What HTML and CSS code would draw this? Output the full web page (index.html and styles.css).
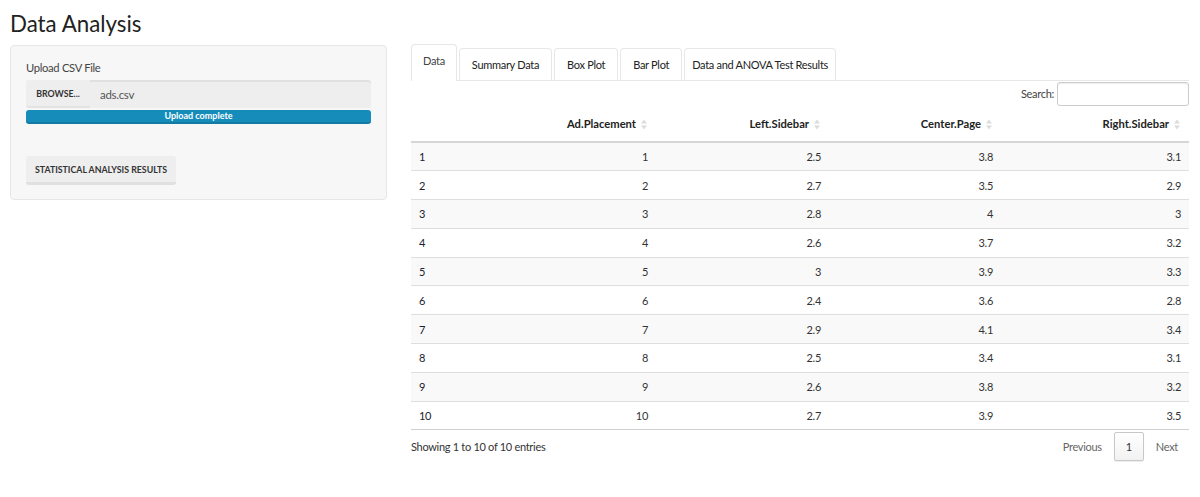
FILE: index.html
```html
<!DOCTYPE html>
<html>
<head>
<meta charset="utf-8">
<link rel="stylesheet" href="styles.css">
</head>
<body>
<div class="page">
  <h1 class="title">Data Analysis</h1>
  <div class="layout">
    <div class="sidebar">
      <label class="field-label">Upload CSV File</label>
      <div class="input-group">
        <span class="browse">Browse...</span>
        <span class="filename">ads.csv</span>
      </div>
      <div class="progress">Upload complete</div>
      <button class="btn">Statistical Analysis Results</button>
    </div>
    <div class="main">
      <ul class="tabs">
        <li class="tab active">Data</li>
        <li class="tab">Summary Data</li>
        <li class="tab">Box Plot</li>
        <li class="tab">Bar Plot</li>
        <li class="tab wide">Data and ANOVA Test Results</li>
      </ul>
      <div class="search-row">
        <label class="search-label">Search:</label>
        <span class="search-input"></span>
      </div>
      <table class="grid">
        <colgroup>
          <col class="c0"><col class="c1"><col class="c2"><col class="c3"><col class="c4">
        </colgroup>
        <thead>
          <tr>
            <th class="left"></th>
            <th>Ad.Placement<span class="sort"><svg width="6" height="11" viewBox="0 0 6 11"><path d="M0 4.5 L3 0.5 L6 4.5 Z M0 6.5 L3 10.5 L6 6.5 Z" fill="#dcdcdc"/></svg></span></th>
            <th>Left.Sidebar<span class="sort"><svg width="6" height="11" viewBox="0 0 6 11"><path d="M0 4.5 L3 0.5 L6 4.5 Z M0 6.5 L3 10.5 L6 6.5 Z" fill="#dcdcdc"/></svg></span></th>
            <th>Center.Page<span class="sort"><svg width="6" height="11" viewBox="0 0 6 11"><path d="M0 4.5 L3 0.5 L6 4.5 Z M0 6.5 L3 10.5 L6 6.5 Z" fill="#dcdcdc"/></svg></span></th>
            <th>Right.Sidebar<span class="sort"><svg width="6" height="11" viewBox="0 0 6 11"><path d="M0 4.5 L3 0.5 L6 4.5 Z M0 6.5 L3 10.5 L6 6.5 Z" fill="#dcdcdc"/></svg></span></th>
          </tr>
        </thead>
        <tbody>
          <tr><td class="left">1</td><td>1</td><td>2.5</td><td>3.8</td><td>3.1</td></tr>
          <tr><td class="left">2</td><td>2</td><td>2.7</td><td>3.5</td><td>2.9</td></tr>
          <tr><td class="left">3</td><td>3</td><td>2.8</td><td>4</td><td>3</td></tr>
          <tr><td class="left">4</td><td>4</td><td>2.6</td><td>3.7</td><td>3.2</td></tr>
          <tr><td class="left">5</td><td>5</td><td>3</td><td>3.9</td><td>3.3</td></tr>
          <tr><td class="left">6</td><td>6</td><td>2.4</td><td>3.6</td><td>2.8</td></tr>
          <tr><td class="left">7</td><td>7</td><td>2.9</td><td>4.1</td><td>3.4</td></tr>
          <tr><td class="left">8</td><td>8</td><td>2.5</td><td>3.4</td><td>3.1</td></tr>
          <tr><td class="left">9</td><td>9</td><td>2.6</td><td>3.8</td><td>3.2</td></tr>
          <tr><td class="left">10</td><td>10</td><td>2.7</td><td>3.9</td><td>3.5</td></tr>
        </tbody>
      </table>
      <div class="footer">
        <span class="info">Showing 1 to 10 of 10 entries</span>
        <div class="pager">
          <span class="pg disabled">Previous</span>
          <span class="pg current">1</span>
          <span class="pg disabled">Next</span>
        </div>
      </div>
    </div>
  </div>
</div>
</body>
</html>
```

FILE: styles.css
```css
* { box-sizing: border-box; }
body {
  margin: 0;
  font-family: Lato, "Open Sans", sans-serif;
  font-size: 11px;
  letter-spacing: -0.3px;
  color: #222;
  background: #fff;
}
.page { padding: 0 11px 0 10px; }
.title {
  margin: 0 0 7px 0;
  padding-top: 10px;
  font-size: 22.3px;
  line-height: 28px;
  font-weight: 400;
  letter-spacing: 0;
  color: #222;
}
.layout {
  display: flex;
  gap: 24px;
  align-items: flex-start;
}
.sidebar {
  width: 377px;
  height: 155px;
  flex: none;
  background: #f7f7f7;
  border: 1px solid #e7e7e7;
  border-radius: 4px;
  padding: 14px 15px 0 15px;
  display: flex;
  flex-direction: column;
  align-items: flex-start;
}
.field-label {
  color: #444;
  line-height: 16px;
  margin-bottom: 4px;
  font-size: 11.2px;
}
.input-group {
  display: flex;
  width: 100%;
  height: 28px;
}
.browse {
  width: 64px;
  flex: none;
  background: #eee;
  border-bottom: 2px solid #e2e2e2;
  border-radius: 3px 0 0 3px;
  font-weight: 700;
  font-size: 8.8px;
  letter-spacing: 0;
  text-transform: uppercase;
  color: #333;
  display: flex;
  align-items: center;
  justify-content: center;
  padding-top: 1px;
}
.filename {
  flex: 1;
  background: #eee;
  border-radius: 0 3px 3px 0;
  box-shadow: inset 0 2px 0 rgba(0,0,0,0.06);
  display: flex;
  align-items: center;
  padding-left: 10px;
  color: #555;
  font-size: 11.5px;
}
.progress {
  width: 100%;
  height: 14px;
  margin-top: 2px;
  background: #158cba;
  border-bottom: 2px solid #127ba3;
  border-radius: 3px;
  color: #fff;
  font-size: 9px;
  font-weight: 700;
  letter-spacing: 0;
  text-align: center;
  line-height: 12px;
}
.btn {
  margin-top: 32px;
  width: 150px;
  height: 29px;
  background: #eee;
  border: none;
  border-bottom: 3px solid #e0e0e0;
  border-radius: 3px;
  font-family: inherit;
  font-weight: 700;
  font-size: 8.8px;
  letter-spacing: 0;
  text-transform: uppercase;
  color: #333;
  padding: 1px 0 0 0;
}
.main {
  width: 778px;
  flex: none;
}
.tabs {
  list-style: none;
  margin: 0;
  padding: 0;
  display: flex;
  gap: 2px;
  align-items: flex-end;
  border-bottom: 1px solid #e7e7e7;
  height: 36px;
}
.tab {
  height: 32px;
  border: 1px solid #e7e7e7;
  border-bottom: none;
  border-radius: 4px 4px 0 0;
  padding: 0 12px;
  display: flex;
  align-items: center;
  color: #222;
  white-space: nowrap;
}
.tab.wide { padding: 0 7px; }
.tab.active {
  height: 37px;
  margin-bottom: -1px;
  background: #fff;
  padding: 0 11px 5px 11px;
  color: #444;
}
.search-row {
  display: flex;
  justify-content: flex-end;
  align-items: center;
  gap: 3px;
  height: 25px;
}
.search-label { color: #444; }
.search-input {
  width: 132px;
  height: 24px;
  border: 1px solid #ccc;
  border-radius: 3px;
  box-shadow: inset 0 1px 1px rgba(0,0,0,0.075);
  background: #fff;
}
.grid {
  width: 100%;
  table-layout: fixed;
  border-collapse: collapse;
}
.c0 { width: 70px; }
.c1 { width: 175px; }
.c2 { width: 173px; }
.c3 { width: 172px; }
.c4 { width: 188px; }
.grid th {
  text-align: right;
  font-weight: 700;
  font-size: 11.2px;
  letter-spacing: 0;
  color: #222;
  padding: 1px 9px 0 8px;
  height: 36px;
  border-bottom: 2px solid #d6d6d6;
  white-space: nowrap;
}
.sort {
  display: inline-block;
  vertical-align: middle;
  margin-left: 5px;
  width: 6px;
  height: 11px;
  position: relative;
  top: -1px;
}
.sort svg { display: block; }
.grid td {
  text-align: right;
  padding: 0 8px;
  height: 28.8px;
  border-top: 1px solid #dedede;
  color: #333;
}
.grid td.left, .grid th.left { text-align: left; }
.grid td.left { color: #1a2230; }
.grid tbody tr:nth-child(odd) { background: #f9f9f9; }
.grid tbody tr:last-child td { border-bottom: 1px solid #cfcfcf; }
.footer {
  display: flex;
  justify-content: space-between;
  align-items: center;
  height: 32px;
}
.info { color: #333; }
.pager {
  display: flex;
  align-items: center;
}
.pg {
  padding: 0 12px;
  color: #666;
}
.pg.current {
  width: 30px;
  height: 29px;
  padding: 0;
  display: flex;
  align-items: center;
  justify-content: center;
  color: #333;
  border: 1px solid #c8c8c8;
  border-radius: 2px;
  background: linear-gradient(#fff, #f2f2f2);
  box-shadow: 0 1px 1px rgba(0,0,0,0.08);
}
.pg:last-child { padding-right: 11px; }
```
